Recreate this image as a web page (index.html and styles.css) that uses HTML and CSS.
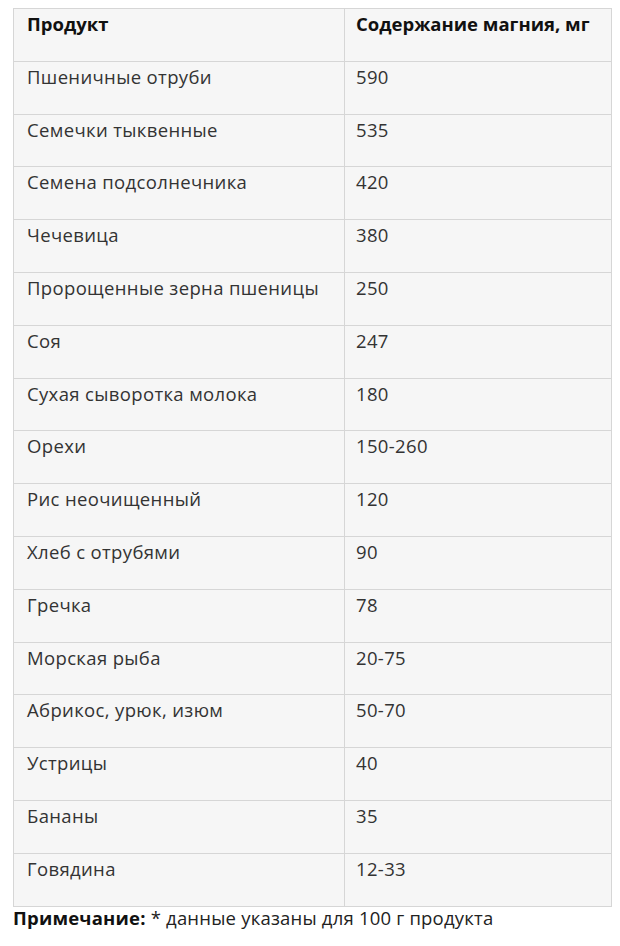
FILE: index.html
```html
<!DOCTYPE html>
<html lang="ru">
<head>
<meta charset="utf-8">
<title>Магний</title>
<link rel="stylesheet" href="styles.css">
</head>
<body>
<table class="tbl">
  <tr><th>Продукт</th><th>Содержание магния, мг</th></tr>
  <tr><td>Пшеничные отруби</td><td>590</td></tr>
  <tr><td>Семечки тыквенные</td><td>535</td></tr>
  <tr><td>Семена подсолнечника</td><td>420</td></tr>
  <tr><td>Чечевица</td><td>380</td></tr>
  <tr><td>Пророщенные зерна пшеницы</td><td>250</td></tr>
  <tr><td>Соя</td><td>247</td></tr>
  <tr><td>Сухая сыворотка молока</td><td>180</td></tr>
  <tr><td>Орехи</td><td>150-260</td></tr>
  <tr><td>Рис неочищенный</td><td>120</td></tr>
  <tr><td>Хлеб с отрубями</td><td>90</td></tr>
  <tr><td>Гречка</td><td>78</td></tr>
  <tr><td>Морская рыба</td><td>20-75</td></tr>
  <tr><td>Абрикос, урюк, изюм</td><td>50-70</td></tr>
  <tr><td>Устрицы</td><td>40</td></tr>
  <tr><td>Бананы</td><td>35</td></tr>
  <tr><td>Говядина</td><td>12-33</td></tr>
</table>
<p class="note"><b>Примечание:</b> * данные указаны для 100 г продукта</p>
</body>
</html>
```
FILE: styles.css
```css
html, body {
  margin: 0;
  padding: 0;
  background: #ffffff;
}
body {
  padding: 8px 9px 0 13px;
  font-family: "Open Sans", "Noto Sans", sans-serif;
  font-size: 18.5px;
  color: #333333;
}
.tbl {
  border-collapse: collapse;
  width: 599px;
  table-layout: fixed;
  background: #f6f6f6;
}
.tbl th, .tbl td {
  border: 1px solid #d6d6d6;
  text-align: left;
  vertical-align: top;
  padding: 3px 12px 25px 13px;
  line-height: 23.8px;
  letter-spacing: 0.35px;
}
.tbl th:first-child, .tbl td:first-child {
  width: 305px;
}
.tbl th + th, .tbl td + td {
  padding-left: 11px;
}
.tbl td {
  font-weight: 400;
}
.tbl th {
  font-weight: 700;
  color: #111111;
  letter-spacing: 0;
}
.note {
  margin: 0;
  line-height: 22px;
  color: #222222;
  letter-spacing: 0.2px;
}
.note b {
  color: #111111;
}
```
